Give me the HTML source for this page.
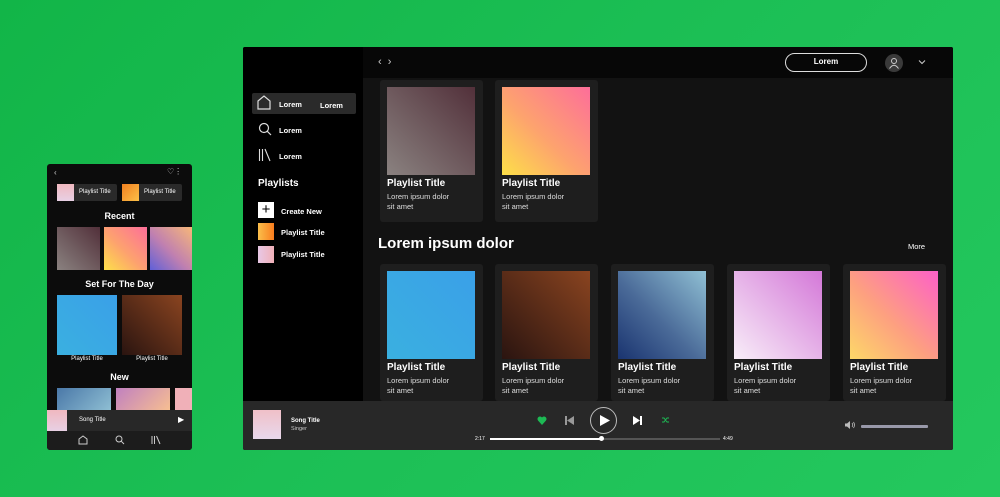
<!DOCTYPE html>
<html><head><style>
*{margin:0;padding:0;box-sizing:border-box}
body{width:1000px;height:497px;overflow:hidden;position:relative;font-family:"Liberation Sans",sans-serif;background:linear-gradient(135deg,#12b548 0%,#1cbf55 50%,#24c85e 100%);color:#fff}
.a{position:absolute}
.card{position:absolute;width:103px;background:#1e1e1e;border-radius:3px;overflow:hidden}
.card .im{position:absolute;left:7px;top:7px;width:88px;height:88px}
.card .t{position:absolute;left:7px;top:98px;font-size:10px;font-weight:bold}
.card .s{position:absolute;left:7px;top:112px;font-size:7.5px;color:#ddd;line-height:9.5px}
.sb{font-size:7.5px;font-weight:bold}
</style></head><body>
<div class="a" style="left:243px;top:47px;width:710px;height:403px;background:#121212;border-radius:2px;overflow:hidden">
 <div class="a" style="left:0;top:0;width:120px;height:354px;background:#000"></div>
 <div class="a" style="left:120px;top:0;width:590px;height:31px;background:#070707"></div>
 <div class="a" style="left:135px;top:9px;font-size:11px;color:#ccc">‹ &nbsp;›</div>
 <div class="a" style="left:542px;top:6px;width:82px;height:19px;border:1.5px solid #ddd;border-radius:10px;text-align:center;font-size:8px;font-weight:bold;line-height:16px">Lorem</div>
 <div class="a" style="left:642px;top:7px;width:18px;height:18px;border-radius:50%;background:#3a3a3a"></div>
 <svg class="a" style="left:645px;top:10px" width="12" height="12" viewBox="0 0 12 12"><circle cx="6" cy="4" r="2.5" fill="none" stroke="#ccc"/><path d="M1.5 11.5Q6 5 10.5 11.5" fill="none" stroke="#ccc"/></svg>
 <svg class="a" style="left:675px;top:12px" width="8" height="6" viewBox="0 0 8 6"><path d="M1 1.5L4 4.5L7 1.5" fill="none" stroke="#ccc"/></svg>
 <div class="a" style="left:9px;top:46px;width:104px;height:21px;background:#2a2a2a;border-radius:2px"></div>
 <svg class="a" style="left:14px;top:48px" width="14" height="15" viewBox="0 0 14 15"><path d="M1 6L7 1L13 6V14H1Z" fill="none" stroke="#ddd" stroke-width="1.2"/></svg>
 <div class="a sb" style="left:36px;top:53px">Lorem</div>
 <div class="a sb" style="left:77px;top:54px">Lorem</div>
 <svg class="a" style="left:15px;top:75px" width="14" height="14" viewBox="0 0 14 14"><circle cx="6" cy="6" r="4.5" fill="none" stroke="#ddd" stroke-width="1.2"/><path d="M9.3 9.3L13 13" stroke="#ddd" stroke-width="1.2"/></svg>
 <div class="a sb" style="left:36px;top:79px">Lorem</div>
 <svg class="a" style="left:15px;top:101px" width="14" height="14" viewBox="0 0 14 14"><path d="M1.5 1V13M4.5 1V13M7 1L12 13" stroke="#ddd" stroke-width="1.1"/></svg>
 <div class="a sb" style="left:36px;top:105px">Lorem</div>
 <div class="a" style="left:15px;top:131px;font-size:10px;font-weight:bold">Playlists</div>
 <div class="a" style="left:15px;top:155px;width:16px;height:16px;background:#fff;color:#000;font-size:15px;line-height:15px;text-align:center">+</div>
 <div class="a sb" style="left:38px;top:160px">Create New</div>
 <div class="a" style="left:15px;top:176px;width:16px;height:17px;background:linear-gradient(90deg,#fbbf4b,#f97d1e)"></div>
 <div class="a sb" style="left:38px;top:181px">Playlist Title</div>
 <div class="a" style="left:15px;top:199px;width:16px;height:17px;background:linear-gradient(90deg,#e8c8e6,#f0b0b8)"></div>
 <div class="a sb" style="left:38px;top:203px">Playlist Title</div>
 <div class="card" style="left:137px;top:33px;height:142px"><div class="im" style="background:linear-gradient(225deg,#52303a,#8a8280)"></div><div class="t">Playlist Title</div><div class="s">Lorem ipsum dolor<br>sit amet</div></div>
 <div class="card" style="left:252px;top:33px;height:142px"><div class="im" style="background:linear-gradient(225deg,#fd6e9a,#fda36e 55%,#fde048)"></div><div class="t">Playlist Title</div><div class="s">Lorem ipsum dolor<br>sit amet</div></div>
 <div class="a" style="left:135px;top:188px;font-size:15px;font-weight:bold">Lorem ipsum dolor</div>
 <div class="a" style="left:665px;top:195px;font-size:7.5px">More</div>
 <div class="card" style="left:137px;top:217px;height:137px"><div class="im" style="background:linear-gradient(225deg,#3aa0e8,#3ab0e0)"></div><div class="t">Playlist Title</div><div class="s">Lorem ipsum dolor<br>sit amet</div></div>
 <div class="card" style="left:252px;top:217px;height:137px"><div class="im" style="background:linear-gradient(225deg,#8a4420,#2a1410)"></div><div class="t">Playlist Title</div><div class="s">Lorem ipsum dolor<br>sit amet</div></div>
 <div class="card" style="left:368px;top:217px;height:137px"><div class="im" style="background:linear-gradient(225deg,#90c0d4,#4a6a98 55%,#1a3470)"></div><div class="t">Playlist Title</div><div class="s">Lorem ipsum dolor<br>sit amet</div></div>
 <div class="card" style="left:484px;top:217px;height:137px"><div class="im" style="background:linear-gradient(225deg,#d478d8,#f8eef8)"></div><div class="t">Playlist Title</div><div class="s">Lorem ipsum dolor<br>sit amet</div></div>
 <div class="card" style="left:600px;top:217px;height:137px"><div class="im" style="background:linear-gradient(225deg,#fd60c8,#fda080 55%,#fdd868)"></div><div class="t">Playlist Title</div><div class="s">Lorem ipsum dolor<br>sit amet</div></div>
 <div class="a" style="left:0;top:354px;width:710px;height:49px;background:#282828"></div>
 <div class="a" style="left:10px;top:363px;width:28px;height:29px;background:linear-gradient(#f0c0c8,#e8d8ec)"></div>
 <div class="a" style="left:48px;top:371px;font-size:6px;font-weight:bold">Song Title</div>
 <div class="a" style="left:48px;top:379px;font-size:5.5px;color:#ccc">Singer</div>
 <svg class="a" style="left:294px;top:369px" width="10" height="9" viewBox="0 0 10 9"><path d="M5 9L1 4.5A2.3 2.3 0 0 1 5 1.5A2.3 2.3 0 0 1 9 4.5Z" fill="#1db954"/></svg>
 <svg class="a" style="left:321px;top:368px" width="11" height="11" viewBox="0 0 11 11"><rect x="1" y="1" width="2" height="9" fill="#999"/><path d="M10 1V10L3 5.5Z" fill="#999"/></svg>
 <div class="a" style="left:347px;top:360px;width:27px;height:27px;border:1.3px solid #bbb;border-radius:50%"></div>
 <svg class="a" style="left:355px;top:367px" width="13" height="13" viewBox="0 0 13 13"><path d="M2 1V12L12 6.5Z" fill="#fff"/></svg>
 <svg class="a" style="left:389px;top:368px" width="11" height="11" viewBox="0 0 11 11"><path d="M1 1V10L8 5.5Z" fill="#fff"/><rect x="8" y="1" width="2" height="9" fill="#fff"/></svg>
 <svg class="a" style="left:418px;top:369px" width="9" height="8" viewBox="0 0 9 8"><path d="M1 2H3L6 6H8M1 6H3L6 2H8" fill="none" stroke="#1db954"/></svg>
 <div class="a" style="left:232px;top:389px;font-size:5px">2:17</div>
 <div class="a" style="left:247px;top:391px;width:230px;height:2px;background:#555"></div>
 <div class="a" style="left:247px;top:391px;width:111px;height:2px;background:#fff"></div>
 <div class="a" style="left:356px;top:389px;width:5px;height:5px;border-radius:50%;background:#fff"></div>
 <div class="a" style="left:480px;top:389px;font-size:5px">4:49</div>
 <svg class="a" style="left:601px;top:373px" width="12" height="10" viewBox="0 0 12 10"><path d="M1 3.5H3L6 1V9L3 6.5H1Z" fill="#bbb"/><path d="M8 3Q9.5 5 8 7M9.5 2Q11.5 5 9.5 8" fill="none" stroke="#bbb" stroke-width="0.8"/></svg>
 <div class="a" style="left:618px;top:378px;width:67px;height:2.5px;background:#99a;border-radius:1px"></div>
</div>
<div class="a" style="left:47px;top:164px;width:145px;height:286px;background:#0c0c0c;border-radius:3px;overflow:hidden">
 <div class="a" style="left:7px;top:4px;font-size:8px;color:#ccc">‹</div>
 <div class="a" style="left:120px;top:3px;font-size:8px;color:#ccc">♡⋮</div>
 <div class="a" style="left:10px;top:20px;width:60px;height:17px;background:#2a2a2a;border-radius:2px"></div>
 <div class="a" style="left:10px;top:20px;width:17px;height:17px;background:linear-gradient(#f0b8c0,#e8d0e4)"></div>
 <div class="a" style="left:32px;top:25px;font-size:6px">Playlist Title</div>
 <div class="a" style="left:75px;top:20px;width:60px;height:17px;background:#2a2a2a;border-radius:2px"></div>
 <div class="a" style="left:75px;top:20px;width:17px;height:17px;background:linear-gradient(135deg,#f08020,#fcc048)"></div>
 <div class="a" style="left:97px;top:25px;font-size:6px">Playlist Title</div>
 <div class="a" style="left:0;top:47px;width:145px;text-align:center;font-size:9px;font-weight:bold">Recent</div>
 <div class="a" style="left:10px;top:63px;width:43px;height:43px;background:linear-gradient(225deg,#52303a,#8a8280)"></div>
 <div class="a" style="left:57px;top:63px;width:43px;height:43px;background:linear-gradient(225deg,#fd6e9a,#fda36e 55%,#fde048)"></div>
 <div class="a" style="left:103px;top:63px;width:43px;height:43px;background:linear-gradient(225deg,#f8b878,#c080b0 55%,#6060d8)"></div>
 <div class="a" style="left:0;top:115px;width:145px;text-align:center;font-size:9px;font-weight:bold">Set For The Day</div>
 <div class="a" style="left:10px;top:131px;width:60px;height:60px;background:linear-gradient(225deg,#3aa0e8,#3ab0e0)"></div>
 <div class="a" style="left:75px;top:131px;width:60px;height:60px;background:linear-gradient(225deg,#8a4420,#2a1410)"></div>
 <div class="a" style="left:10px;top:192px;width:60px;text-align:center;font-size:6px">Playlist Title</div>
 <div class="a" style="left:75px;top:192px;width:60px;text-align:center;font-size:6px">Playlist Title</div>
 <div class="a" style="left:0;top:208px;width:145px;text-align:center;font-size:9px;font-weight:bold">New</div>
 <div class="a" style="left:10px;top:224px;width:54px;height:24px;background:linear-gradient(135deg,#4a78a8,#90c0d4)"></div>
 <div class="a" style="left:69px;top:224px;width:54px;height:24px;background:linear-gradient(135deg,#c080c0,#f8c090)"></div>
 <div class="a" style="left:128px;top:224px;width:20px;height:24px;background:#f0b0b8"></div>
 <div class="a" style="left:0;top:246px;width:145px;height:21px;background:#282828"></div>
 <div class="a" style="left:0;top:246px;width:20px;height:21px;background:linear-gradient(#f0b8c0,#e8d0e4)"></div>
 <div class="a" style="left:32px;top:253px;font-size:6px">Song Title</div>
 <div class="a" style="left:131px;top:251px;font-size:8px">▶</div>
 <div class="a" style="left:0;top:267px;width:145px;height:19px;background:#1c1c1c"></div>
 <svg class="a" style="left:31px;top:271px" width="10" height="10" viewBox="0 0 10 10"><path d="M1 4L5 1L9 4V9H1Z" fill="none" stroke="#ccc"/></svg>
 <svg class="a" style="left:68px;top:271px" width="10" height="10" viewBox="0 0 10 10"><circle cx="4" cy="4" r="3" fill="none" stroke="#ccc"/><path d="M6.2 6.2L9 9" stroke="#ccc"/></svg>
 <svg class="a" style="left:104px;top:271px" width="10" height="10" viewBox="0 0 10 10"><path d="M1 1V9M3.5 1V9M5.5 1L9 9" stroke="#ccc"/></svg>
</div>
</body></html>
